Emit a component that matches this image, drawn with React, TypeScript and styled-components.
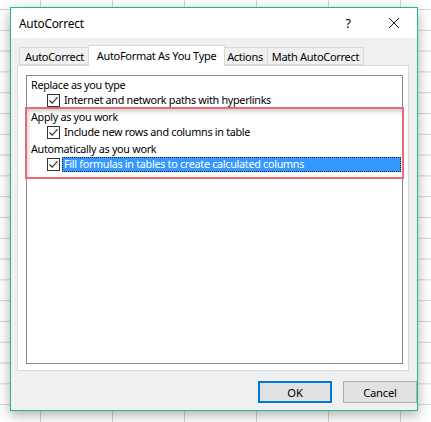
import styled, {createGlobalStyle} from "styled-components";

const GlobalStyle = createGlobalStyle`
  html, body {
    margin: 0;
    padding: 0;
  }

  body {
    background-color: #ffffff;
    background-image:
      linear-gradient(to right, #d4d4d4 1px, transparent 1px),
      linear-gradient(to bottom, #d4d4d4 1px, transparent 1px);
    background-position: 40px 9px;
    background-size: 72px 20.8px;
    font-family: "Segoe UI", "Noto Sans", "Open Sans", sans-serif;
    font-size: 10.8px;
    letter-spacing: -0.3px;
    color: #000000;
    height: 422px;
    overflow: hidden;
  }
`;

const Desktop = styled.div`
  padding: 7px 0 0 10px;
`;

const Window = styled.div`
  background: #f0f0f0;
  border: 1px solid #20b49a;
  box-shadow: 0 4px 12px rgba(0, 0, 0, 0.32);
  box-sizing: border-box;
  display: flex;
  flex-direction: column;
  height: 404px;
  width: 408px;
`;

const TitleBar = styled.div`
  align-items: center;
  background: #ffffff;
  display: flex;
  flex: 0 0 30px;
  padding-left: 8px;
`;

const Title = styled.span`
  flex: 1;
  font-size: 11.8px;
  letter-spacing: -0.2px;
  padding-bottom: 1px;
`;

const TitleButton = styled.span`
  align-items: center;
  display: flex;
  height: 30px;
  justify-content: center;
  width: 46px;
  font-size: 12.5px;
`;

const Body = styled.div`
  display: flex;
  flex: 1;
  flex-direction: column;
  padding: 7px 6px 7px 6px;
`;

const TabStrip = styled.div`
  align-items: flex-end;
  display: flex;
  height: 20px;
  padding-left: 2px;
  position: relative;
  z-index: 1;
`;

const Tab = styled.div<{ $active?: boolean; $width: number }>`
  align-items: center;
  background: ${p => p.$active ? "#ffffff" : "#f0f0f0"};
  border: 1px solid #d9d9d9;
  border-bottom: ${p => p.$active ? "none" : "1px solid #d9d9d9"};
  box-sizing: border-box;
  display: flex;
  font-size: 11px;
  height: ${p => p.$active ? "21px" : "18px"};
  justify-content: center;
  margin-bottom: ${p => p.$active ? "-1px" : "0"};
  margin-left: ${p => p.$active ? "-2px" : "-1px"};
  margin-right: ${p => p.$active ? "-2px" : "0"};
  padding-bottom: ${p => p.$active ? "2px" : "0"};
  padding-top: ${p => p.$active ? "0" : "1px"};
  width: ${p => p.$width}px;
  white-space: nowrap;
  position: ${p => p.$active ? "relative" : "static"};
  z-index: ${p => p.$active ? 1 : 0};

  &:first-child {
    margin-left: 0;
  }
`;

const Panel = styled.div`
  background: #ffffff;
  border: 1px solid #d9d9d9;
  box-sizing: border-box;
  height: 306px;
  padding: 9px 5px 6px 8px;
  width: 392px;
`;

const ListBox = styled.div`
  border: 1px solid #828790;
  box-sizing: border-box;
  height: 289px;
  position: relative;
  width: 377px;
`;

const Heading = styled.div`
  align-items: center;
  display: flex;
  height: 16px;
  padding-left: 4px;
  white-space: nowrap;
`;

const Item = styled.div`
  align-items: center;
  display: flex;
  height: 16px;
  padding-left: 20px;
  white-space: nowrap;
`;

const Box = styled.span`
  align-items: center;
  border: 1px solid #333333;
  box-sizing: border-box;
  display: flex;
  flex: 0 0 13px;
  height: 13px;
  justify-content: center;
  margin-right: 2px;
  width: 13px;
`;

const Label = styled.span<{ $selected?: boolean }>`
  align-items: center;
  background: ${p => p.$selected ? "#3399ff" : "transparent"};
  box-sizing: border-box;
  color: ${p => p.$selected ? "#ffffff" : "#000000"};
  display: flex;
  flex: ${p => p.$selected ? "0 0 339px" : "none"};
  height: 15px;
  outline: ${p => p.$selected ? "1px dotted #1a1a1a" : "none"};
  outline-offset: -1px;
  padding: 0 2px 1px;
`;

const Highlight = styled.div`
  border: 2px solid #e86a79;
  box-shadow: inset 3px 4px 5px -2px rgba(0, 0, 0, 0.22);
  box-sizing: border-box;
  height: 72px;
  left: -2px;
  pointer-events: none;
  position: absolute;
  top: 31px;
  width: 379px;
`;

const Footer = styled.div`
  display: flex;
  gap: 11px;
  justify-content: flex-end;
  margin-top: 10px;
  margin-right: -6px;
`;

const Button = styled.button<{ $default?: boolean }>`
  background: #e1e1e1;
  border: ${p => p.$default ? "2px solid #0078d7" : "1px solid #adadad"};
  box-sizing: border-box;
  color: #000000;
  font-family: inherit;
  font-size: 11.2px;
  letter-spacing: -0.2px;
  height: 22px;
  padding: 0;
  width: 74px;
`;

function Check() {
  return (
    <svg width="11" height="11" viewBox="0 0 11 11">
      <path d="M1.5 5.5 L4.2 8.2 L9.6 2.2" fill="none" stroke="#333333" strokeWidth="1.2" />
    </svg>
  );
}

function CheckItem({ label, selected }: { label: string; selected?: boolean }) {
  return (
    <Item>
      <Box><Check /></Box>
      <Label $selected={selected}>{label}</Label>
    </Item>
  );
}

export default function App() {
  return (<>
    <GlobalStyle />
    <Desktop>
      <Window>
        <TitleBar>
          <Title>AutoCorrect</Title>
          <TitleButton>?</TitleButton>
          <TitleButton>
            <svg width="12" height="12" viewBox="0 0 12 12">
              <path d="M1 1 L11 11 M11 1 L1 11" stroke="#111111" strokeWidth="1" />
            </svg>
          </TitleButton>
        </TitleBar>
        <Body>
          <TabStrip>
            <Tab $width={71}>AutoCorrect</Tab>
            <Tab $active $width={137}>AutoFormat As You Type</Tab>
            <Tab $width={46}>Actions</Tab>
            <Tab $width={97}>Math AutoCorrect</Tab>
          </TabStrip>
          <Panel>
            <ListBox>
              <Heading>Replace as you type</Heading>
              <CheckItem label="Internet and network paths with hyperlinks" />
              <Heading>Apply as you work</Heading>
              <CheckItem label="Include new rows and columns in table" />
              <Heading>Automatically as you work</Heading>
              <CheckItem label="Fill formulas in tables to create calculated columns" selected />
              <Highlight />
            </ListBox>
          </Panel>
          <Footer>
            <Button $default>OK</Button>
            <Button>Cancel</Button>
          </Footer>
        </Body>
      </Window>
    </Desktop>
  </>);
}
